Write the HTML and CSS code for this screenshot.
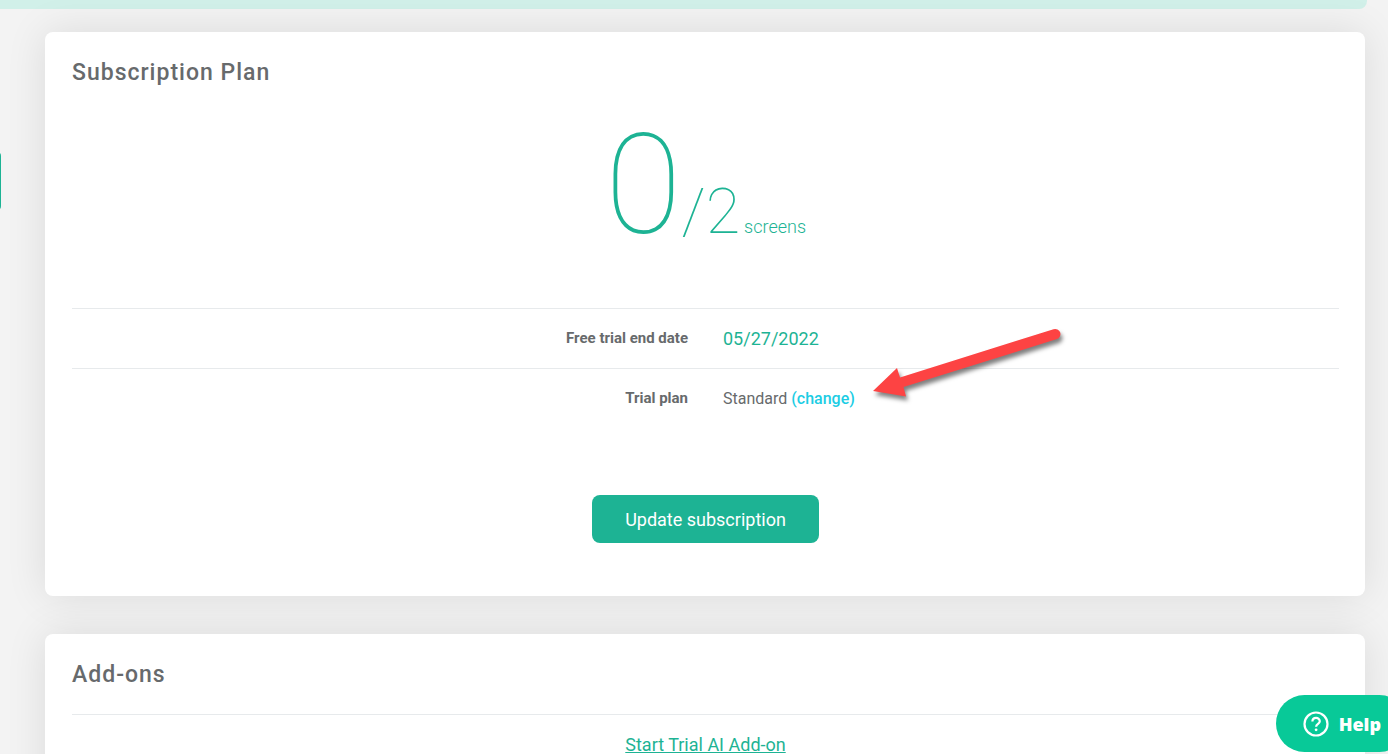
FILE: index.html
```html
<!DOCTYPE html>
<html lang="en">
<head>
    <meta charset="UTF-8">
    <meta name="viewport" content="width=device-width, initial-scale=1.0">
    <title>Subscription</title>
    <link rel="stylesheet" href="styles.css">
</head>
<body>

<div class="banner"></div>
<div class="side-tab"></div>

<main class="container">
    <section class="card">
        <h2>Subscription Plan</h2>

        <div class="usage">
            <span class="used">0</span><span class="total">/2</span>
            <span class="unit">screens</span>
        </div>

        <dl class="details">
            <div class="row">
                <dt>Free trial end date</dt>
                <dd class="date">05/27/2022</dd>
            </div>
            <div class="row">
                <dt>Trial plan</dt>
                <dd>
                    <span class="plan">Standard <a href="#">(change)</a>
                        <svg class="arrow" width="200" height="90" viewBox="0 0 200 90" aria-hidden="true">
                            <path d="M4 64 L28 41 L31 50.500 L184.500 2.200 A5.200 5.200 0 0 1 188 12 L34.500 60 L37 69.500 Z" fill="#fd4343"/>
                        </svg>
                    </span>
                </dd>
            </div>
        </dl>

        <div class="actions">
            <button type="button" class="btn">Update subscription</button>
        </div>
    </section>

    <section class="card">
        <h2>Add-ons</h2>
        <div class="addons">
            <a href="#">Start Trial AI Add-on</a>
        </div>
    </section>
</main>

<button type="button" class="help">
    <svg width="26" height="26" viewBox="0 0 26 26" fill="none" stroke="#fff" stroke-width="2.200" aria-hidden="true">
        <circle cx="13" cy="13" r="11.500"/>
        <path d="M9.400 10.500 C9.400 5.800 16.800 5.800 16.800 10.300 C16.800 13 13.100 12.800 13.100 15.800"/>
        <circle cx="13.100" cy="18.800" r="1.400" fill="#fff" stroke="none"/>
    </svg>
    Help
</button>

</body>
</html>
```

FILE: styles.css
```css
:root {
    --bg: #f3f3f3;
    --accent: #1db394;
    --link: #1ccde4;
    --text: #676a6c;
    --line: #e7eaec;
}

* { box-sizing: border-box; }

body {
    background: var(--bg);
    color: var(--text);
    font-family: Roboto, sans-serif;
    font-size: 16px;
    margin: 0;
    height: 100vh;
    overflow: hidden;
}

.banner {
    height: 9px;
    margin-right: 21px;
    background: #d1f0e9;
    border-radius: 0 0 8px 0;
}

/* Edge of the collapsed side menu */
.side-tab {
    position: absolute;
    left: -7px;
    top: 152px;
    width: 8px;
    height: 58px;
    background: var(--accent);
    border-radius: 4px;
}

.container { padding: 23px 23px 0 45px; }

.card {
    background: #fff;
    border-radius: 8px;
    padding: 26px 26px 53px 27px;
    margin-bottom: 38px;
    box-shadow: 0 0 40px rgba(0, 0, 0, 0.1);
}

h2 {
    margin: 0;
    font-size: 23px;
    font-weight: 500;
    line-height: 30px;
    letter-spacing: 1px;
}

.usage {
    margin-top: 20px;
    height: 200px;
    line-height: 154px;
    text-align: center;
    color: var(--accent);
}
.used { font-size: 140px; font-weight: 100; }
.total { font-size: 63px; font-weight: 100; }
.unit { font-size: 18px; font-weight: 300; }

.details { margin: 0; }
.row {
    display: grid;
    grid-template-columns: 1fr 1fr;
    column-gap: 35px;
    height: 60px;
    line-height: 59px;
    border-top: 1px solid var(--line);
}
dt { text-align: right; font-size: 15px; font-weight: 700; }
dd { margin: 0; }
.date { font-size: 18px; color: var(--accent); }

.plan { position: relative; }
.plan a { color: var(--link); font-weight: 500; text-decoration: none; }
.arrow {
    position: absolute;
    left: 100%;
    top: -62px;
    margin-left: 14px;
    filter: drop-shadow(2px 4px 2px rgba(0, 0, 0, 0.5));
}

.actions { margin-top: 67px; text-align: center; }
.btn {
    display: inline-block;
    vertical-align: top;
    height: 48px;
    padding: 0 33px;
    border: none;
    border-radius: 8px;
    background: var(--accent);
    color: #fff;
    font-family: inherit;
    font-size: 18px;
    cursor: pointer;
}

.addons {
    margin-top: 24px;
    padding-top: 18px;
    border-top: 1px solid var(--line);
    text-align: center;
    font-size: 18px;
    line-height: 24px;
}
.addons a { color: var(--accent); }

.help {
    position: fixed;
    right: -20px;
    bottom: 2px;
    display: flex;
    align-items: center;
    gap: 10px;
    height: 57px;
    padding: 0 27px;
    border: none;
    border-radius: 29px;
    background: #08c998;
    color: #fff;
    font-family: "Open Sans", sans-serif;
    font-size: 18px;
    font-weight: 800;
    cursor: pointer;
}
```
